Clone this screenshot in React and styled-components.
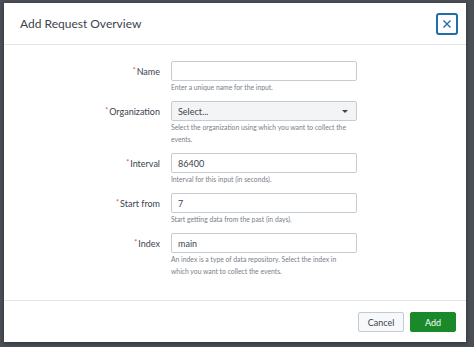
import styled, { createGlobalStyle } from "styled-components";

const GlobalStyle = createGlobalStyle`
  html, body {
    margin: 0;
    padding: 0;
    background: #474b52;
  }
  body {
    font-family: Lato, "Open Sans", sans-serif;
  }
`;

const Backdrop = styled.div`
  width: 474px;
  height: 347px;
  padding: 3px 8px 5px 4px;
  box-sizing: border-box;
  background: #4a4e55;
`;

const Modal = styled.div`
  width: 462px;
  height: 339px;
  background: #fff;
  display: flex;
  flex-direction: column;
  box-shadow: 0 1px 4px rgba(0, 0, 0, 0.4);
`;

const Header = styled.div`
  height: 41px;
  display: flex;
  align-items: center;
  justify-content: space-between;
  padding: 0 8px 0 16px;
  border-bottom: 1px solid #e1e6eb;
  flex-shrink: 0;
`;

const Title = styled.h2`
  margin: 0;
  font-size: 12px;
  font-weight: 400;
  color: #3c444d;
`;

const CloseButton = styled.button`
  width: 22px;
  height: 22px;
  padding: 0;
  display: flex;
  align-items: center;
  justify-content: center;
  background: #fff;
  border: 2px solid #1e6fa5;
  border-radius: 3px;
  box-sizing: border-box;
  cursor: pointer;
`;

const Body = styled.div`
  flex: 1;
  padding-top: 16px;
`;

const Field = styled.div`
  display: grid;
  grid-template-columns: 156px 186px;
  column-gap: 11px;
  margin-bottom: 8px;
`;

const Label = styled.label`
  grid-row: 1;
  display: flex;
  align-items: center;
  justify-content: flex-end;
  font-size: 9px;
  color: #3c444d;
  height: 20px;
`;

const Star = styled.span`
  color: #dc4e41;
  font-size: 7px;
  margin-right: 1px;
  position: relative;
  top: -1px;
`;

const Input = styled.input`
  grid-column: 2;
  height: 20px;
  box-sizing: border-box;
  border: 1px solid #c3cbd4;
  border-radius: 2px;
  padding: 0 6px;
  font-family: Lato, "Open Sans", sans-serif;
  font-size: 9px;
  color: #3c444d;
  outline: none;
`;

const Select = styled.div`
  grid-column: 2;
  height: 20px;
  box-sizing: border-box;
  border: 1px solid #c3cbd4;
  border-radius: 2px;
  background: #f2f4f5;
  padding: 0 8px 0 6px;
  display: flex;
  align-items: center;
  justify-content: space-between;
  font-size: 9px;
  color: #3c444d;
`;

const Caret = styled.span`
  width: 0;
  height: 0;
  border-left: 3px solid transparent;
  border-right: 3px solid transparent;
  border-top: 3px solid #3c444d;
`;

const Help = styled.div`
  grid-column: 2;
  font-size: 6.8px;
  line-height: 12px;
  color: #7a8088;
`;

const Footer = styled.div`
  height: 42px;
  border-top: 1px solid #e1e6eb;
  display: flex;
  justify-content: flex-end;
  align-items: flex-start;
  gap: 6px;
  padding: 11px 10px 0 0;
  box-sizing: border-box;
  flex-shrink: 0;
`;

const Button = styled.button`
  width: 46px;
  height: 20px;
  border-radius: 2px;
  font-family: Lato, "Open Sans", sans-serif;
  font-size: 9px;
  cursor: pointer;
  border: 1px solid ${(p) => (p.$primary ? "#1a8929" : "#c3cbd4")};
  background: ${(p) => (p.$primary ? "#1a8929" : "#f7f8fa")};
  color: ${(p) => (p.$primary ? "#fff" : "#3c444d")};
`;

const fields = [
  { label: "Name", value: "", help: ["Enter a unique name for the input."] },
  {
    label: "Organization",
    select: true,
    help: ["Select the organization using which you want to collect the", "events."],
  },
  { label: "Interval", value: "86400", help: ["Interval for this input (in seconds)."] },
  { label: "Start from", value: "7", help: ["Start getting data from the past (in days)."] },
  {
    label: "Index",
    value: "main",
    help: ["An index is a type of data repository. Select the index in", "which you want to collect the events."],
  },
];

export default function App() {
  return (
    <>
      <GlobalStyle />
      <Backdrop>
        <Modal>
          <Header>
            <Title>Add Request Overview</Title>
            <CloseButton aria-label="Close">
              <svg width="10" height="10" viewBox="0 0 10 10">
                <path d="M1.5 1.5 L8.5 8.5 M8.5 1.5 L1.5 8.5" stroke="#1e6fa5" strokeWidth="1.4" />
              </svg>
            </CloseButton>
          </Header>
          <Body>
            {fields.map((f) => (
              <Field key={f.label}>
                <Label>
                  <Star>*</Star>
                  {f.label}
                </Label>
                {f.select ? (
                  <Select>
                    Select...
                    <Caret />
                  </Select>
                ) : (
                  <Input defaultValue={f.value} />
                )}
                <Help>
                  {f.help.map((h) => (
                    <div key={h}>{h}</div>
                  ))}
                </Help>
              </Field>
            ))}
          </Body>
          <Footer>
            <Button>Cancel</Button>
            <Button $primary>Add</Button>
          </Footer>
        </Modal>
      </Backdrop>
    </>
  );
}
